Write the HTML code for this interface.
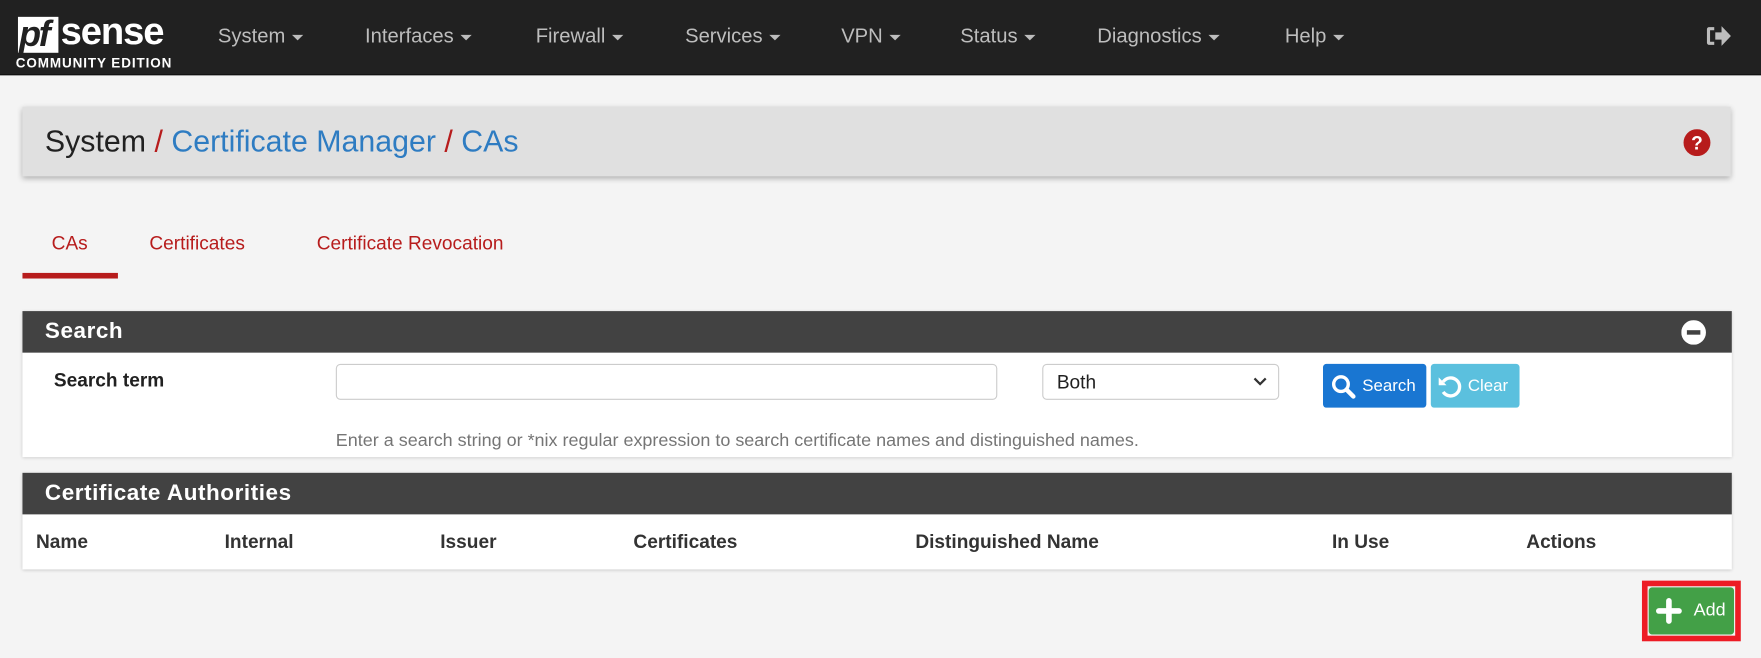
<!DOCTYPE html>
<html><head><meta charset="utf-8"><style>
*{box-sizing:border-box;margin:0;padding:0}
html,body{width:1761px;height:658px;overflow:hidden;background:#f4f4f4}
#w{position:absolute;left:0;top:0;width:1568px;height:586px;overflow:hidden;transform:scale(1.12309);transform-origin:0 0;font-family:"Liberation Sans",Roboto,sans-serif;color:#212121}
.nav{position:absolute;left:0;top:0;width:1568px;height:67px;background:#212121;border-bottom:1px solid #111}
.nav .it{position:absolute;top:22px;color:#bdbdbd;font-size:18px}
.caret{display:inline-block;width:0;height:0;border-left:5px solid transparent;border-right:5px solid transparent;border-top:5px solid #bdbdbd;vertical-align:middle;margin-left:6px}
.bc{position:absolute;left:20px;top:95px;width:1521px;height:62px;background:#e0e0e0;box-shadow:0 2px 5px rgba(0,0,0,.3);font-size:27px;padding:16px 20px}
.bc .r{color:#b71c1c}.bc .b{color:#2e7cc2}
.tab{position:absolute;top:207px;font-size:17px;color:#b71c1c}
.panel{position:absolute;left:20px;width:1522px;background:#fff;box-shadow:0 1px 3px rgba(0,0,0,.2)}
.ph{height:37px;background:#424242;color:#fff;font-size:20px;font-weight:bold;padding:7px 20px;letter-spacing:.5px}
.th{position:absolute;top:52px;font-weight:bold;font-size:17px;color:#333}
</style></head><body><div id="w">
<div class="nav">
 <div style="position:absolute;left:16px;top:15px;width:36px;height:32px;background:#fff"></div>
 <div style="position:absolute;left:17px;top:12px;font-size:32px;font-weight:bold;font-style:italic;color:#212121;letter-spacing:-2px">pf</div>
 <div style="position:absolute;left:54px;top:9px;font-size:34px;font-weight:bold;color:#fff;letter-spacing:-1px">sense</div>
 <div style="position:absolute;left:14px;top:49px;font-size:12px;font-weight:bold;color:#fff;letter-spacing:.8px">COMMUNITY EDITION</div>
 <div class="it" style="left:194px">System<span class="caret"></span></div>
 <div class="it" style="left:325px">Interfaces<span class="caret"></span></div>
 <div class="it" style="left:477px">Firewall<span class="caret"></span></div>
 <div class="it" style="left:610px">Services<span class="caret"></span></div>
 <div class="it" style="left:749px">VPN<span class="caret"></span></div>
 <div class="it" style="left:855px">Status<span class="caret"></span></div>
 <div class="it" style="left:977px">Diagnostics<span class="caret"></span></div>
 <div class="it" style="left:1144px">Help<span class="caret"></span></div>
 <svg style="position:absolute;left:1518px;top:22px" width="26" height="21" viewBox="0 0 28 22"><path d="M9 2H4a2 2 0 0 0-2 2v13a2 2 0 0 0 2 2h5v-3H5V5h4z" fill="#bdbdbd"/><path d="M10 7h6V1l9 9.5-9 9.5v-6h-6z" fill="#bdbdbd"/></svg>
</div>
<div class="bc">System<span class="r"> / </span> <span class="b">Certificate Manager</span><span class="r"> / </span> <span class="b">CAs</span>
 <svg style="position:absolute;right:18px;top:20px" width="24" height="24" viewBox="0 0 24 24"><circle cx="12" cy="12" r="12" fill="#b71c1c"/><text x="12" y="18" text-anchor="middle" font-size="17" font-weight="bold" fill="#fff" font-family="Liberation Sans">?</text></svg>
</div>
<div class="tab" style="left:46px">CAs</div>
<div style="position:absolute;left:20px;top:243px;width:85px;height:5px;background:#b71c1c"></div>
<div class="tab" style="left:133px">Certificates</div>
<div class="tab" style="left:282px">Certificate Revocation</div>

<div class="panel" style="top:277px;height:130px">
 <div class="ph">Search</div>
 <svg style="position:absolute;left:1477px;top:8px" width="22" height="22"><circle cx="11" cy="11" r="11" fill="#fff"/><rect x="5" y="9" width="12" height="4" fill="#424242"/></svg>
 <div style="position:absolute;left:28px;top:52px;font-weight:bold;font-size:17px">Search term</div>
 <div style="position:absolute;left:279px;top:47px;width:589px;height:32px;border:1px solid #ccc;border-radius:4px"></div>
 <div style="position:absolute;left:908px;top:47px;width:211px;height:32px;border:1px solid #ccc;border-radius:4px;font-size:17px;padding:6px 12px">Both<svg style="position:absolute;right:10px;top:11px" width="12" height="8"><path d="M1 1l5 5 5-5" stroke="#333" stroke-width="2" fill="none"/></svg></div>
 <div style="position:absolute;left:1158px;top:47px;width:92px;height:39px;background:#1976d2;border-radius:3px;color:#fff;font-size:15px;padding:11px 0 0 35px">Search
  <svg style="position:absolute;left:6px;top:8px" width="24" height="24"><circle cx="10" cy="10" r="6.5" stroke="#fff" stroke-width="3" fill="none"/><path d="M15 15l6 6" stroke="#fff" stroke-width="4" stroke-linecap="round"/></svg></div>
 <div style="position:absolute;left:1254px;top:47px;width:79px;height:39px;background:#5bc0de;border-radius:3px;color:#fff;font-size:15px;padding:11px 0 0 33px">Clear
  <svg style="position:absolute;left:5px;top:8px" width="24" height="24"><path d="M6 8a8 8 0 1 1 0 9" stroke="#fff" stroke-width="3" fill="none"/><path d="M2 4v7h7z" fill="#fff"/></svg></div>
 <div style="position:absolute;left:279px;top:107px;font-size:16px;color:#757575">Enter a search string or *nix regular expression to search certificate names and distinguished names.</div>
</div>

<div class="panel" style="top:421px;height:86px">
 <div class="ph">Certificate Authorities</div>
 <div class="th" style="left:12px">Name</div>
 <div class="th" style="left:180px">Internal</div>
 <div class="th" style="left:372px">Issuer</div>
 <div class="th" style="left:544px">Certificates</div>
 <div class="th" style="left:795px">Distinguished Name</div>
 <div class="th" style="left:1166px">In Use</div>
 <div class="th" style="left:1339px">Actions</div>
</div>

<div style="position:absolute;left:1462px;top:517px;width:88px;height:54px;border:5px solid #ed1c24"></div>
<div style="position:absolute;left:1468px;top:523px;width:76px;height:42px;background:#43a047;border-radius:3px;color:#fff;font-size:16px;padding:12px 0 0 40px">Add
 <svg style="position:absolute;left:6px;top:9px" width="24" height="24"><path d="M12 3v18M3 12h18" stroke="#fff" stroke-width="5" stroke-linecap="round"/></svg></div>
</div></body></html>
